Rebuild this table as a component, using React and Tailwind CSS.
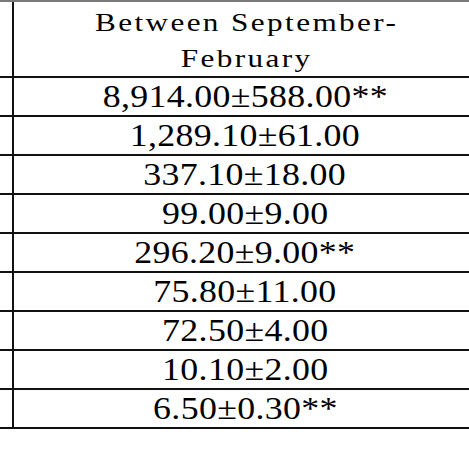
export default function App() {
  const rows = [
    "8,914.00±588.00**",
    "1,289.10±61.00",
    "337.10±18.00",
    "99.00±9.00",
    "296.20±9.00**",
    "75.80±11.00",
    "72.50±4.00",
    "10.10±2.00",
    "6.50±0.30**",
  ];
  return (
    <div
      className="w-[469px] h-[469px] overflow-hidden bg-white text-black"
      style={{ fontFamily: '"Liberation Serif", "Times New Roman", serif' }}
    >
      <div className="w-[476px] border-t-2 border-[#7a7a7a]">
        <div className="flex h-[74px]">
          <div className="w-[14px] shrink-0 border-r-2 border-[#111]" />
          <div className="flex-1 pt-[3px] text-center text-[26px] leading-[36px]">
            <div className="inline-block scale-x-[1.2] tracking-[2px] pl-[2px]">
              <div>Between September-</div>
              <div>February</div>
            </div>
          </div>
        </div>
        {rows.map((r, i) => (
          <div
            key={i}
            className={
              "flex border-t-2 border-[#111]" +
              (i === rows.length - 1 ? " border-b-2" : "")
            }
          >
            <div className="w-[14px] shrink-0 border-r-2 border-[#111]" />
            <div className="flex-1 h-[37px] text-center text-[32px] leading-[36px]">
              <span className="inline-block scale-x-[1.12] tracking-[0.3px]">{r}</span>
            </div>
          </div>
        ))}
      </div>
    </div>
  );
}
